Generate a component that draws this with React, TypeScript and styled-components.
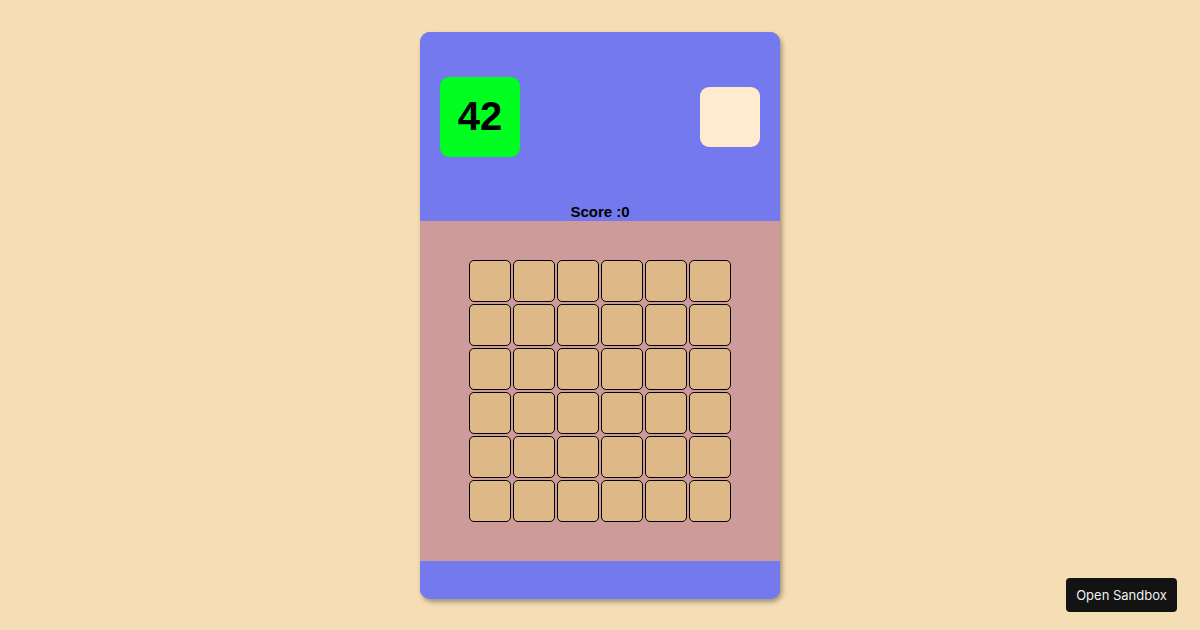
import React from "react";
import styled, { createGlobalStyle } from "styled-components";

const Global = createGlobalStyle`
  html, body { margin: 0; padding: 0; background: #f5deb3; }
  body { font-family: "Liberation Sans", Arial, sans-serif; }
  #root { min-height: 630px; }
`;

const Page = styled.div`
  width: 1200px;
  height: 630px;
  display: flex;
  justify-content: center;
  padding-top: 32px;
  box-sizing: border-box;
  position: relative;
`;

const Card = styled.div`
  width: 360px;
  height: 567px;
  border-radius: 10px;
  overflow: hidden;
  display: flex;
  flex-direction: column;
  box-shadow: 2px 3px 5px rgba(0, 0, 0, 0.35);
  background: #7479ee;
`;

const Header = styled.div`
  height: 189px;
  display: flex;
  flex-direction: column;
  background: #7479ee;
`;

const TopRow = styled.div`
  flex: 1;
  display: flex;
  align-items: center;
  justify-content: space-between;
  padding: 0 20px 2px 20px;
`;

const Target = styled.div`
  width: 80px;
  height: 80px;
  border-radius: 9px;
  background: #00ff20;
  display: flex;
  align-items: center;
  justify-content: center;
  font-size: 40px;
  font-weight: 700;
  color: #000;
`;

const Preview = styled.div`
  width: 60px;
  height: 60px;
  border-radius: 9px;
  background: #ffebcd;
`;

const Score = styled.div`
  text-align: center;
  font-size: 15px;
  font-weight: 700;
  color: #000;
  line-height: 18px;
`;

const Board = styled.div`
  height: 340px;
  background: #ce9b9b;
  display: flex;
  align-items: center;
  justify-content: center;
`;

const Grid = styled.div`
  display: grid;
  grid-template-columns: repeat(6, 42px);
  grid-auto-rows: 42px;
  gap: 2px;
`;

const Cell = styled.div`
  box-sizing: border-box;
  border: 1px solid #000;
  border-radius: 5px;
  background: #deb887;
`;

const Footer = styled.div`
  flex: 1;
  background: #7479ee;
`;

const SandboxButton = styled.button`
  position: absolute;
  right: 23px;
  bottom: 18px;
  width: 111px;
  height: 34px;
  border: none;
  border-radius: 4px;
  background: #131313;
  color: #f0f0f0;
  font-family: Inter, "Liberation Sans", sans-serif;
  font-size: 13px;
  cursor: pointer;
`;

export default function App() {
  const cells = Array.from({ length: 36 }, (_, i) => i);
  return (
    <>
      <Global />
      <Page>
        <Card>
          <Header>
            <TopRow>
              <Target>42</Target>
              <Preview />
            </TopRow>
            <Score>Score :0</Score>
          </Header>
          <Board>
            <Grid>
              {cells.map((i) => (
                <Cell key={i} />
              ))}
            </Grid>
          </Board>
          <Footer />
        </Card>
        <SandboxButton>Open Sandbox</SandboxButton>
      </Page>
    </>
  );
}
